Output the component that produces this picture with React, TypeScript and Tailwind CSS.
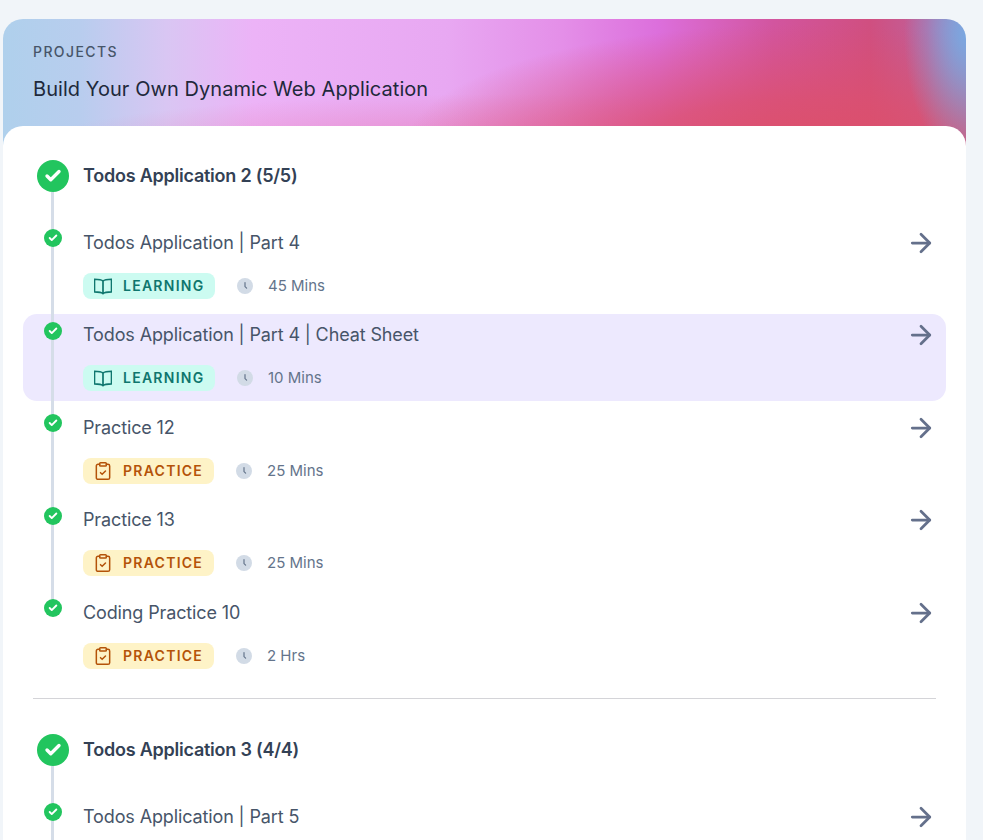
import React from 'react';
import { ArrowRight, Check, ClipboardCheck } from 'lucide-react';

type Step = {
  title: string;
  kind?: 'LEARNING' | 'PRACTICE';
  time?: string;
  active?: boolean;
};

const firstSteps: Step[] = [
  { title: 'Todos Application | Part 4', kind: 'LEARNING', time: '45 Mins' },
  { title: 'Todos Application | Part 4 | Cheat Sheet', kind: 'LEARNING', time: '10 Mins', active: true },
  { title: 'Practice 12', kind: 'PRACTICE', time: '25 Mins' },
  { title: 'Practice 13', kind: 'PRACTICE', time: '25 Mins' },
  { title: 'Coding Practice 10', kind: 'PRACTICE', time: '2 Hrs' },
];

const ClockDot = () => (
  <svg viewBox="0 0 16 16" className="h-4 w-4">
    <circle cx="8" cy="8" r="8" fill="#d2dbe6" />
    <path d="M8 4.5V8.6L9.6 10.2" fill="none" stroke="#64748b" strokeWidth="1.2" strokeLinecap="round" />
  </svg>
);

const BookIcon = () => (
  <svg viewBox="2 2 20 20" className="h-[18px] w-[18px]" fill="none" stroke="currentColor" strokeWidth="1.9" strokeLinejoin="round">
    <path d="M12 6.5C10.5 5 8 4.5 2.5 4.5V18.5C8 18.5 10.5 19 12 20.5C13.5 19 16 18.5 21.5 18.5V4.5C16 4.5 13.5 5 12 6.5ZM12 6.5V20.5" />
  </svg>
);

const Badge = ({ kind }: { kind: Step['kind'] }) => {
  if (kind === 'LEARNING') {
    return (
      <span className="flex h-[26px] w-[132px] items-center gap-[11px] rounded-lg bg-[#ccfbf1] pl-[11px] text-sm leading-none font-semibold tracking-[0.09em] text-[#0f766e]">
        <BookIcon />
        LEARNING
      </span>
    );
  }
  return (
    <span className="flex h-[26px] w-[131px] items-center gap-[10px] rounded-lg bg-[#fef3c7] pl-[10px] text-sm leading-none font-semibold tracking-[0.09em] text-[#b45309]">
      <ClipboardCheck size={20} strokeWidth={1.8} />
      PRACTICE
    </span>
  );
};

const StepRow = ({ step }: { step: Step }) => (
  <div className={`mt-[5.5px] flex h-[87px] rounded-[14px] pr-[10px] ${step.active ? 'bg-[#ede9fe]' : ''}`}>
    <div className="flex w-[60px] shrink-0 justify-center pt-[7.5px]">
      <span className="relative z-20 flex h-[18px] w-[18px] items-center justify-center rounded-full bg-[#22c55e]">
        <Check size={10} strokeWidth={4.5} className="text-white" />
      </span>
    </div>
    <div className="flex min-w-0 flex-1 flex-col pt-[9.25px]">
      <div className="flex h-6 items-center justify-between">
        <span className="text-lg leading-6 tracking-[-0.007em] text-[#475569]">{step.title}</span>
        <ArrowRight size={30} strokeWidth={2.2} className="shrink-0 text-[#64708b]" />
      </div>
      {step.kind && (
        <div className="mt-[18.15px] flex items-center">
          <Badge kind={step.kind} />
          <span className="ml-[22px]"><ClockDot /></span>
          <span className="ml-[15px] text-[15px] text-[#64748b]">{step.time}</span>
        </div>
      )}
    </div>
  </div>
);

const ModuleHead = ({ title }: { title: string }) => (
  <div className="flex h-8 items-center pl-[14px]">
    <span className="relative z-20 flex h-8 w-8 items-center justify-center rounded-full bg-[#22c55e]">
      <Check size={18} strokeWidth={4.5} className="text-white" />
    </span>
    <span className="ml-[14px] text-lg leading-6 font-semibold tracking-[-0.013em] text-[#334155]">{title}</span>
  </div>
);

export default function App() {
  return (
    <div className="h-[840px] overflow-hidden bg-[#f1f5f9] pt-[19px] pl-[3px] font-['Inter',sans-serif]">
      <div className="h-[900px] w-[963px] rounded-t-[20px] bg-[radial-gradient(ellipse_62px_125px_at_100%_12%,#7ba7e0_0%,rgba(123,167,224,0)_100%),radial-gradient(ellipse_400px_125px_at_800px_130px,#dc4f68_0%,rgba(220,80,110,0.8)_40%,rgba(220,80,110,0)_100%),radial-gradient(ellipse_480px_55px_at_500px_130px,rgba(230,110,160,0.55)_0%,rgba(230,110,160,0)_100%),linear-gradient(90deg,#afd0ec_0%,#b8cdee_8%,#d9c6f3_17%,#ecb3f7_26%,#e8a8f2_46%,#e48fe8_58%,#dc6fdc_68%,#d2559f_80%,#d04f80_90%,#c0609a_96%,#9a88c0_100%)] bg-[length:100%_130px] bg-no-repeat">
        <div className="h-[107px] pt-[25px] pl-[30px]">
          <p className="text-sm leading-4 font-medium tracking-[0.1em] text-[#475569]">PROJECTS</p>
          <h1 className="mt-[15px] text-xl leading-7 tracking-[0.003em] text-[#1e293b]">Build Your Own Dynamic Web Application</h1>
        </div>
        <div className="h-[800px] rounded-t-[20px] bg-white px-5 pt-[34px]">
          <div className="relative">
            <div className="absolute top-8 bottom-[70px] left-[28px] z-10 w-[3px] bg-[#d5dde8]" />
            <ModuleHead title="Todos Application 2 (5/5)" />
            <div className="mt-[29.5px]">
              {firstSteps.map((step) => (
                <StepRow key={step.title + step.time} step={step} />
              ))}
            </div>
          </div>
          <div className="mx-[10px] mt-[19.5px] h-px bg-[#d4d4d8]" />
          <div className="relative mt-[35px]">
            <div className="absolute top-8 bottom-0 left-[28px] z-10 w-[3px] bg-[#d5dde8]" />
            <ModuleHead title="Todos Application 3 (4/4)" />
            <div className="mt-[29.5px]">
              <StepRow step={{ title: 'Todos Application | Part 5' }} />
            </div>
          </div>
        </div>
      </div>
    </div>
  );
}
